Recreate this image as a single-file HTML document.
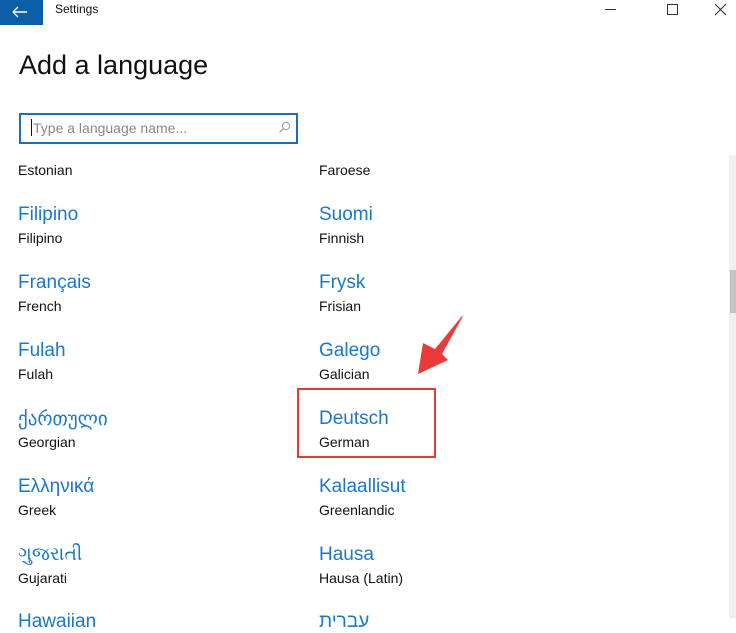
<!DOCTYPE html>
<html><head><meta charset="utf-8"><style>
body{margin:0;width:736px;height:618px;background:#fff;position:relative;overflow:hidden;font-family:"Liberation Sans","DejaVu Sans",sans-serif;}
.a{position:absolute;white-space:nowrap}
.n{font-size:19px;color:#1a78c8}
.e{font-size:14px;color:#111}
</style></head><body>
<div class="a" style="left:0;top:0;width:43px;height:25px;background:#0a5fa8"></div>
<svg class="a" style="top:5px;left:11px" width="18" height="14"><path d="M2 7H16M2 7L7 2M2 7L7 12" stroke="#fff" stroke-width="1.4" fill="none"/></svg>
<div class="a" style="left:55px;top:2px;font-size:12px;color:#111">Settings</div>
<div class="a" style="left:605px;top:9px;width:11px;height:1px;background:#333"></div>
<div class="a" style="left:667px;top:4px;width:9px;height:9px;border:1px solid #333"></div>
<svg class="a" style="left:714px;top:3px" width="13" height="13"><path d="M1 1L12 12M12 1L1 12" stroke="#333" stroke-width="1.1"/></svg>
<div class="a" style="left:19px;top:50px;font-size:27px;color:#111">Add a language</div>
<div class="a" style="left:19px;top:113px;width:275px;height:27px;border:2px solid #1a6fb8"></div>
<div class="a" style="left:31px;top:119px;width:1px;height:17px;background:#111"></div>
<div class="a" style="left:33px;top:120px;font-size:14px;color:#888">Type a language name...</div>
<svg class="a" style="left:278px;top:121px" width="13" height="13"><circle cx="8" cy="5" r="3.6" stroke="#999" fill="none"/><path d="M5.3 7.7L1.5 11.5" stroke="#999" stroke-width="1.2"/></svg>
<div class="a" style="left:729px;top:155px;width:7px;height:463px;background:#f0f0f0"></div>
<div class="a" style="left:730px;top:270px;width:6px;height:43px;background:#c2c2c2"></div>

<div class="a e" style="left:18px;top:162px">Estonian</div>
<div class="a e" style="left:319px;top:162px">Faroese</div>

<div class="a n" style="left:18px;top:204px">Filipino</div><div class="a e" style="left:18px;top:230px">Filipino</div>
<div class="a n" style="left:319px;top:204px">Suomi</div><div class="a e" style="left:319px;top:230px">Finnish</div>
<div class="a n" style="left:18px;top:272px">Français</div><div class="a e" style="left:18px;top:298px">French</div>
<div class="a n" style="left:319px;top:272px">Frysk</div><div class="a e" style="left:319px;top:298px">Frisian</div>
<div class="a n" style="left:18px;top:340px">Fulah</div><div class="a e" style="left:18px;top:366px">Fulah</div>
<div class="a n" style="left:319px;top:340px">Galego</div><div class="a e" style="left:319px;top:366px">Galician</div>
<div class="a n" style="left:18px;top:408px">ქართული</div><div class="a e" style="left:18px;top:434px">Georgian</div>
<div class="a n" style="left:319px;top:408px">Deutsch</div><div class="a e" style="left:319px;top:434px">German</div>
<div class="a n" style="left:18px;top:476px">Ελληνικά</div><div class="a e" style="left:18px;top:502px">Greek</div>
<div class="a n" style="left:319px;top:476px">Kalaallisut</div><div class="a e" style="left:319px;top:502px">Greenlandic</div>
<div class="a n" style="left:18px;top:544px">ગુજરાતી</div><div class="a e" style="left:18px;top:570px">Gujarati</div>
<div class="a n" style="left:319px;top:544px">Hausa</div><div class="a e" style="left:319px;top:570px">Hausa (Latin)</div>
<div class="a n" style="left:18px;top:611px">Hawaiian</div>
<div class="a n" style="left:319px;top:611px">עברית</div>

<div class="a" style="left:297px;top:388px;width:135px;height:66px;border:2px solid #e53a3a"></div>
<svg class="a" style="left:410px;top:312px" width="60" height="70"><polygon points="53,4 32,42 38,48 8,62 13,31 25,37 52,4" fill="#ea3b3b"/></svg>
</body></html>
